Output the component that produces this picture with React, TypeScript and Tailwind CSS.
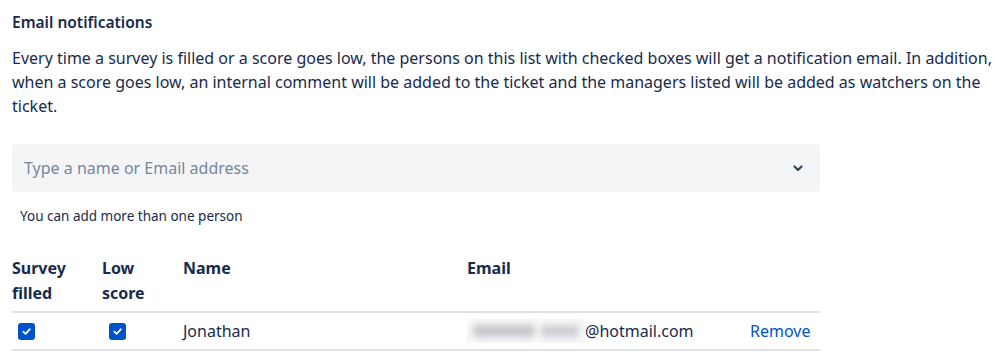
import React from "react";

function Check() {
  return (
    <span className="flex h-[17px] w-[17px] items-center justify-center rounded-[3px] bg-[#0052cc]">
      <svg width="11" height="11" viewBox="0 0 12 12" fill="none">
        <path d="M2.5 6.2 L5 8.5 L9.5 3.6" stroke="white" strokeWidth="2" strokeLinecap="round" strokeLinejoin="round" />
      </svg>
    </span>
  );
}

export default function App() {
  return (
    <div className="min-h-[361px] w-[1000px] bg-white pl-3 pr-1 text-[#172b4d]" style={{ fontFamily: '"Noto Sans", "Open Sans", sans-serif' }}>
      <h2 className="pt-[10px] text-[15.5px] font-semibold leading-6">Email notifications</h2>
      <p className="mt-3 whitespace-nowrap text-[16px] leading-6">
        Every time a survey is filled or a score goes low, the persons on this list with checked boxes will get a notification email. In addition,
        <br />
        when a score goes low, an internal comment will be added to the ticket and the managers listed will be added as watchers on the
        <br />
        ticket.
      </p>
      <div className="mt-[26px] flex h-12 w-[808px] items-center justify-between rounded-[3px] bg-[#f4f5f7] pl-3 pr-4">
        <span className="text-[16px] text-[#7a869a]">Type a name or Email address</span>
        <svg width="12" height="12" viewBox="0 0 12 12" fill="none">
          <path d="M2.5 4.5 L6 8 L9.5 4.5" stroke="#344563" strokeWidth="2.2" strokeLinecap="round" strokeLinejoin="round" />
        </svg>
      </div>
      <div className="mt-[14px] pl-2 text-[13.5px] leading-5">You can add more than one person</div>
      <div className="mt-[30px] w-[808px]">
        <div className="flex border-b-2 border-[#dfe1e6] pb-[5px] text-[16px] font-bold leading-[25px]">
          <div className="w-[90px]">Survey<br />filled</div>
          <div className="w-[81px]">Low<br />score</div>
          <div className="w-[284px]">Name</div>
          <div className="flex-1">Email</div>
        </div>
        <div className="flex h-[38px] items-center border-b-2 border-[#dfe1e6] text-[16px]">
          <div className="w-[90px] pl-[6px]"><Check /></div>
          <div className="w-[81px] pl-[7px]"><Check /></div>
          <div className="w-[284px]">Jonathan</div>
          <div className="flex w-[283px] items-center">
            <span className="relative inline-block h-[24px] w-[118px] overflow-hidden bg-[#f7f7f8]">
              <span className="absolute left-[6px] top-[6px] h-[12px] w-[62px] rounded bg-[#c8c8cc] blur-[3px]" />
              <span className="absolute left-[74px] top-[6px] h-[12px] w-[38px] rounded bg-[#cfcfd3] blur-[3px]" />
            </span>
            <span>@hotmail.com</span>
          </div>
          <div className="text-[#0052cc]">Remove</div>
        </div>
      </div>
    </div>
  );
}
